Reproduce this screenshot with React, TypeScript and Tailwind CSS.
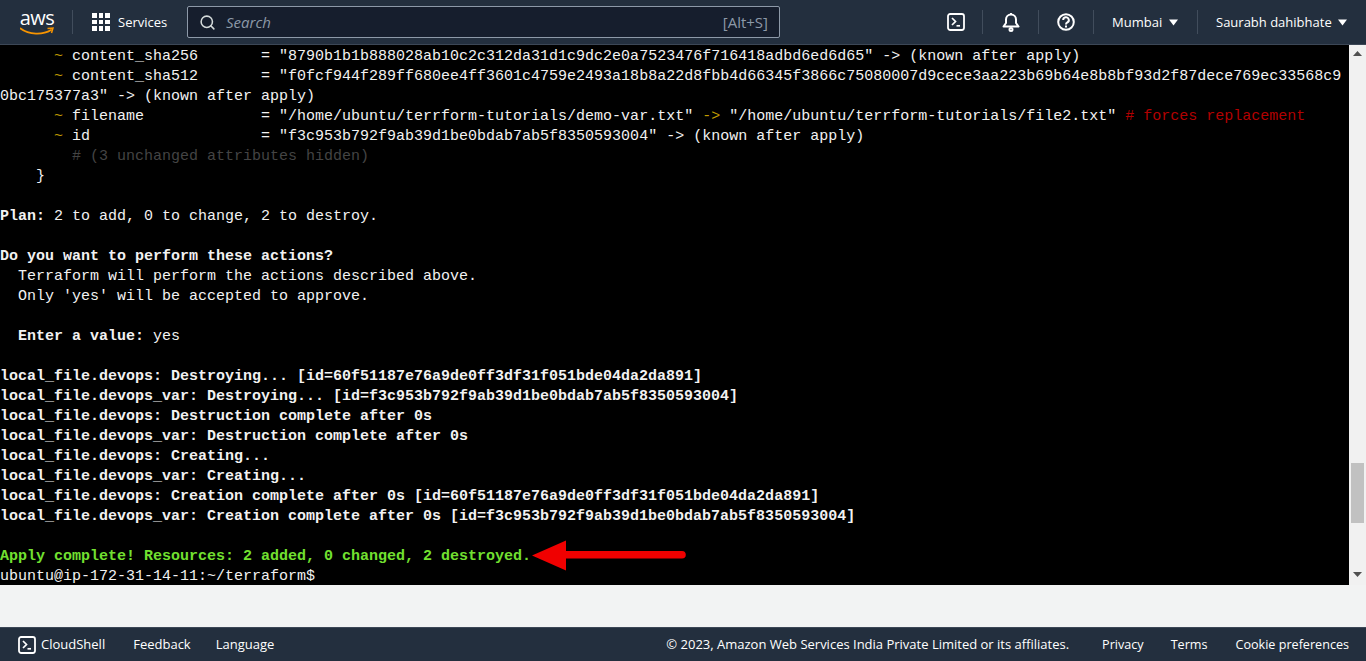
import { Search } from 'lucide-react';

type Seg = { t: string; c?: string };

const Y = 'text-[#c19c00]';
const RED = 'text-[#b30000]';
const DIM = 'text-[#444444]';
const B = 'font-bold';
const GREEN = 'font-bold text-[#72e030]';

// terminal output, one entry per 20px row
const rows: Seg[][] = [
  [{ t: '      ' }, { t: '~', c: Y }, { t: ' content_sha256       = "8790b1b1b888028ab10c2c312da31d1c9dc2e0a7523476f716418adbd6ed6d65" -> (known after apply)' }],
  [{ t: '      ' }, { t: '~', c: Y }, { t: ' content_sha512       = "f0fcf944f289ff680ee4ff3601c4759e2493a18b8a22d8fbb4d66345f3866c75080007d9cece3aa223b69b64e8b8bf93d2f87dece769ec33568c9' }],
  [{ t: '0bc175377a3" -> (known after apply)' }],
  [{ t: '      ' }, { t: '~', c: Y }, { t: ' filename             = "/home/ubuntu/terrform-tutorials/demo-var.txt" ' }, { t: '->', c: Y }, { t: ' "/home/ubuntu/terrform-tutorials/file2.txt" ' }, { t: '# forces replacement', c: RED }],
  [{ t: '      ' }, { t: '~', c: Y }, { t: ' id                   = "f3c953b792f9ab39d1be0bdab7ab5f8350593004" -> (known after apply)' }],
  [{ t: '        ' }, { t: '# (3 unchanged attributes hidden)', c: DIM }],
  [{ t: '    }' }],
  [],
  [{ t: 'Plan:', c: B }, { t: ' 2 to add, 0 to change, 2 to destroy.' }],
  [],
  [{ t: 'Do you want to perform these actions?', c: B }],
  [{ t: '  Terraform will perform the actions described above.' }],
  [{ t: "  Only 'yes' will be accepted to approve." }],
  [],
  [{ t: '  ' }, { t: 'Enter a value:', c: B }, { t: ' yes' }],
  [],
  [{ t: 'local_file.devops: Destroying... [id=60f51187e76a9de0ff3df31f051bde04da2da891]', c: B }],
  [{ t: 'local_file.devops_var: Destroying... [id=f3c953b792f9ab39d1be0bdab7ab5f8350593004]', c: B }],
  [{ t: 'local_file.devops: Destruction complete after 0s', c: B }],
  [{ t: 'local_file.devops_var: Destruction complete after 0s', c: B }],
  [{ t: 'local_file.devops: Creating...', c: B }],
  [{ t: 'local_file.devops_var: Creating...', c: B }],
  [{ t: 'local_file.devops: Creation complete after 0s [id=60f51187e76a9de0ff3df31f051bde04da2da891]', c: B }],
  [{ t: 'local_file.devops_var: Creation complete after 0s [id=f3c953b792f9ab39d1be0bdab7ab5f8350593004]', c: B }],
  [],
  [{ t: 'Apply complete! Resources: 2 added, 0 changed, 2 destroyed.', c: GREEN }],
  [{ t: 'ubuntu@ip-172-31-14-11:~/terraform$' }],
];

function ShellIcon({ size }: { size: number }) {
  return (
    <svg width={size} height={size} viewBox="0 0 18 18" fill="none" stroke="#fff" strokeWidth="1.8">
      <rect x="1" y="1" width="16" height="16" rx="2.2" />
      <path d="M5 5l3.5 3.5L5 12" strokeWidth="1.7" />
      <path d="M9.5 12.8h3.5" strokeWidth="1.7" />
    </svg>
  );
}

function Divider() {
  return <div className="w-px h-6 bg-[#414d5c]" />;
}

function Caret() {
  return (
    <svg width="9" height="7" viewBox="0 0 9 7" fill="#fff">
      <path d="M0 0.5h9L4.5 6.5z" />
    </svg>
  );
}

function Header() {
  return (
    <header className="h-[45px] bg-[#232f3e] border-b border-[#3c4756] flex items-center text-white text-[13px] font-medium shrink-0">
      <div className="ml-[20px] w-[34px] h-[30px] flex flex-col items-center">
        <span className="text-[20px] leading-[20px] font-normal tracking-[-0.5px] mt-[1px]">aws</span>
        <svg width="34" height="9" viewBox="0 0 34 9" fill="none" className="-mt-[1px]">
          <path d="M0.5 1.5C9 8 23 8 31 3" stroke="#f79400" strokeWidth="1.8" strokeLinecap="round" />
          <path d="M27.5 1.5L33 1L31.5 6" stroke="#f79400" strokeWidth="1.5" />
        </svg>
      </div>
      <div className="ml-[18px]"><Divider /></div>
      <div className="ml-[19px] grid grid-cols-3 gap-[2px] w-[18px]">
        {Array.from({ length: 9 }).map((_, i) => (
          <div key={i} className="w-[4.6px] h-[4.6px] bg-white" />
        ))}
      </div>
      <span className="ml-[8px] w-[69px] pt-[1px]">Services</span>
      <div className="w-[593px] h-[32px] bg-[#161e2d] border border-[#8d99a8] rounded-[2px] flex items-center pl-[11px] pr-[11px]">
        <Search size={17} strokeWidth={2.2} className="text-[#d5dbdb]" />
        <span className="ml-[10px] italic font-normal text-[15px] text-[#8d99a8]">Search</span>
        <span className="ml-auto font-normal text-[15px] text-[#8d99a8]">[Alt+S]</span>
      </div>
      <div className="ml-[167px]"><ShellIcon size={18} /></div>
      <div className="ml-[17px]"><Divider /></div>
      <svg className="ml-[19px]" width="18" height="20" viewBox="0 0 18 20" fill="none" stroke="#fff" strokeWidth="2">
        <path d="M1.5 14.5L4 11V7.5a5 5 0 0 1 10 0V11l2.5 3.5z" strokeLinejoin="round" />
        <circle cx="9" cy="17.5" r="1.5" />
        <path d="M9 1v1.5" />
      </svg>
      <div className="ml-[18px]"><Divider /></div>
      <svg className="ml-[18px]" width="18" height="18" viewBox="0 0 18 18" fill="none" stroke="#fff" strokeWidth="2">
        <circle cx="9" cy="9" r="7.8" />
        <path d="M6.2 7a2.8 2.8 0 1 1 4.2 2.4c-.9.5-1.4 1-1.4 2" />
        <path d="M9 12.6v1.8" />
      </svg>
      <div className="ml-[18px]"><Divider /></div>
      <span className="ml-[18px] w-[57px] pt-[1px]">Mumbai</span>
      <Caret />
      <div className="ml-[19px]"><Divider /></div>
      <span className="ml-[18px] w-[122px] whitespace-nowrap pt-[1px]">Saurabh dahibhate</span>
      <Caret />
    </header>
  );
}

function Terminal() {
  return (
    <div className="flex h-[540px] shrink-0">
      <div className="relative w-[1349px] bg-black text-[#f2f2f2] font-['Liberation_Mono',monospace] text-[15px] leading-[20px] whitespace-pre overflow-hidden pt-[2px]">
        {rows.map((row, i) => (
          <div key={i} className="h-[20px]">
            {row.map((s, j) => (
              <span key={j} className={s.c}>{s.t}</span>
            ))}
          </div>
        ))}
        {/* red annotation arrow */}
        <svg className="absolute left-[530px] top-[493px]" width="160" height="36" viewBox="0 0 160 36">
          <path d="M2 17.5L36 2.5V13H152a2.8 2.8 0 0 1 0 7.6H36V32.5z" fill="#f00000" />
        </svg>
      </div>
      <div className="w-[17px] bg-[#f1f1f1] flex flex-col items-center">
        <svg className="mt-[6px]" width="9" height="5" viewBox="0 0 9 5" fill="#505050"><path d="M4.5 0L9 5H0z" /></svg>
        <div className="mt-[407px] w-[13px] h-[60px] bg-[#c1c1c1]" />
        <svg className="mt-[49px]" width="9" height="5" viewBox="0 0 9 5" fill="#505050"><path d="M0 0h9L4.5 5z" /></svg>
      </div>
    </div>
  );
}

function Footer() {
  return (
    <footer className="h-[34px] bg-[#232f3e] border-t border-[#3c4756] flex items-center text-white text-[13px] font-medium shrink-0 mt-auto pt-[1px]">
      <div className="ml-[18px]"><ShellIcon size={18} /></div>
      <span className="ml-[5px]">CloudShell</span>
      <span className="ml-[28px]">Feedback</span>
      <span className="ml-[25px]">Language</span>
      <span className="ml-auto">© 2023, Amazon Web Services India Private Limited or its affiliates.</span>
      <span className="ml-[33px] text-[12.6px]">Privacy</span>
      <span className="ml-[27px] text-[12.6px]">Terms</span>
      <span className="ml-[28px] mr-[17px] text-[12.6px]">Cookie preferences</span>
    </footer>
  );
}

export default function App() {
  return (
    <div className="h-[661px] flex flex-col bg-[#f2f3f3] font-['Open_Sans',sans-serif] overflow-hidden">
      <Header />
      <Terminal />
      <Footer />
    </div>
  );
}
